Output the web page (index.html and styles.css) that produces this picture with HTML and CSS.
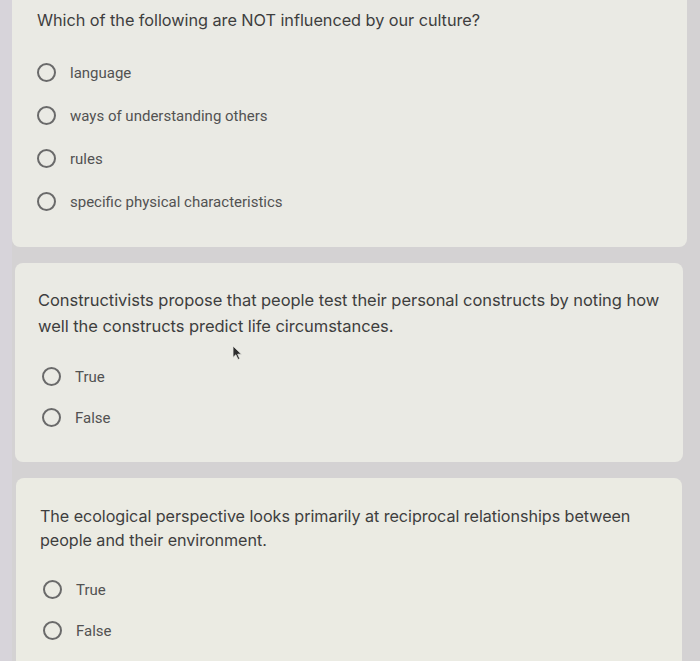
FILE: index.html
```html
<!DOCTYPE html>
<html lang="en">
<head>
<meta charset="utf-8">
<title>Quiz</title>
<link rel="stylesheet" href="styles.css">
</head>
<body>
<main class="page">
  <section class="card card-1">
    <p class="question">Which of the following are NOT influenced by our culture?</p>
    <ul class="options">
      <li class="option"><span class="radio"></span><span class="label">language</span></li>
      <li class="option"><span class="radio"></span><span class="label">ways of understanding others</span></li>
      <li class="option"><span class="radio"></span><span class="label">rules</span></li>
      <li class="option"><span class="radio"></span><span class="label">specific physical characteristics</span></li>
    </ul>
  </section>
  <section class="card card-2">
    <p class="question">Constructivists propose that people test their personal constructs by noting how well the constructs predict life circumstances.</p>
    <ul class="options">
      <li class="option"><span class="radio"></span><span class="label">True</span></li>
      <li class="option"><span class="radio"></span><span class="label">False</span></li>
    </ul>
    <svg class="cursor" width="11" height="16" viewBox="0 0 11 16" aria-hidden="true">
      <path d="M1 1 L1 12.5 L3.8 9.8 L6 14.5 L7.8 13.7 L5.7 9.2 L9.5 9.2 Z" fill="#2e2e2e" stroke="#e8e8e2" stroke-width="0.8" stroke-linejoin="round"/>
    </svg>
  </section>
  <section class="card card-3">
    <p class="question">The ecological perspective looks primarily at reciprocal relationships between people and their environment.</p>
    <ul class="options">
      <li class="option"><span class="radio"></span><span class="label">True</span></li>
      <li class="option"><span class="radio"></span><span class="label">False</span></li>
    </ul>
  </section>
</main>
</body>
</html>
```

FILE: styles.css
```css
html, body {
  margin: 0;
  padding: 0;
}

body {
  background: #d4d2d3;
  height: 661px;
  overflow: hidden;
  font-family: "Open Sans", "Liberation Sans", sans-serif;
}

.page {
  display: flex;
  flex-direction: column;
  gap: 16px;
  background: linear-gradient(to right, #d7d4da 0, #d7d4da 12px, #d4d2d3 12px);
  min-height: 661px;
}

.card {
  position: relative;
  background: #eaeae4;
  border-radius: 8px;
}

.card-1 {
  margin: 0 13px 0 12px;
  padding: 8px 20px 24px 25px;
  border-radius: 0 0 8px 8px;
}

.card-2 {
  margin: 0 17px 0 15px;
  padding: 24px 16px 24px 23px;
}

.card-3 {
  margin: 0 18px 0 16px;
  padding: 26px 20px 30px 24px;
  background: #ebebe3;
}

.question {
  margin: 0;
  color: #3e3e3e;
  font-family: "Inter", "Open Sans", sans-serif;
  font-size: 16.3px;
  font-weight: 400;
  letter-spacing: -0.05px;
}

.card-1 .question {
  line-height: 24px;
}

.card-2 .question {
  line-height: 26px;
  font-size: 16.5px;
}

.card-3 .question {
  line-height: 24px;
  font-size: 16.15px;
}

.options {
  list-style: none;
  margin: 0;
  padding: 0;
}

.card-1 .options {
  margin-top: 19px;
}

.card-2 .options {
  margin-top: 17px;
  padding-left: 4px;
}

.card-3 .options {
  margin-top: 17px;
  padding-left: 3px;
}

.option {
  display: flex;
  align-items: center;
  gap: 14px;
}

.card-1 .option {
  height: 43px;
}

.card-2 .option,
.card-3 .option {
  height: 41px;
}

.radio {
  box-sizing: border-box;
  width: 19px;
  height: 19px;
  border: 2px solid #6a6a6a;
  border-radius: 50%;
  flex: none;
}

.label {
  color: #525252;
  font-family: "Roboto", "Liberation Sans", sans-serif;
  font-size: 15px;
}

.cursor {
  position: absolute;
  left: 217px;
  top: 82px;
}
```
